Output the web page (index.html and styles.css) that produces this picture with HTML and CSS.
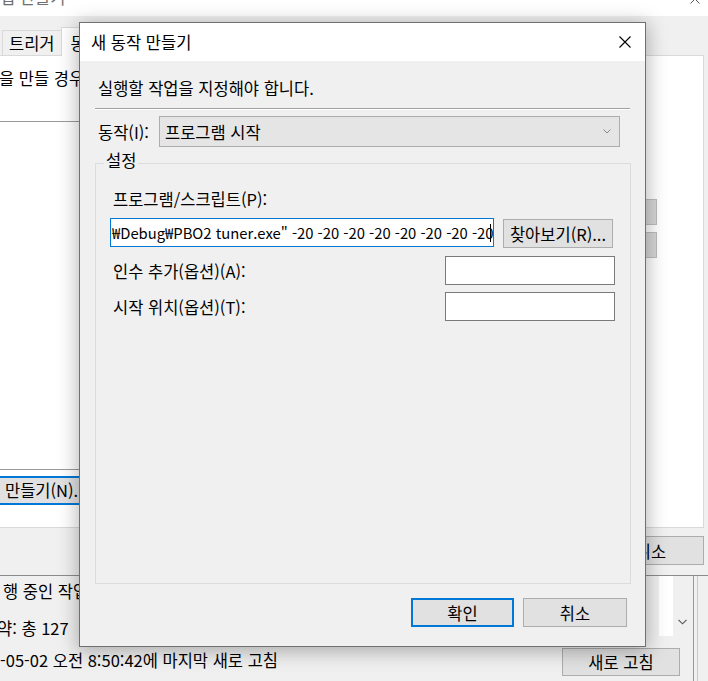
FILE: index.html
```html
<!DOCTYPE html>
<html lang="ko">
<head>
<meta charset="utf-8">
<title>새 동작 만들기</title>
<link rel="stylesheet" href="styles.css">
</head>
<body>
<div class="screen">
  <div class="task-win">
    <div class="tw-title">
      <span class="tw-title-text">업 만들기</span>
      <svg class="tw-close" width="10" height="10" viewBox="0 0 10 10"><path d="M0.5 0.5L9.5 9.5M9.5 0.5L0.5 9.5" stroke="#555" stroke-width="1" fill="none"/></svg>
    </div>
    <div class="tw-body">
      <div class="tabs">
        <div class="tab">트리거</div>
        <div class="tab tab-active"><span class="tab-clip">동작</span></div>
      </div>
      <div class="pane">
        <div class="pane-text">을 만들 경우</div>
        <div class="list-row">
          <div class="listview"></div>
          <div class="side-btns">
            <div class="side-btn"></div>
            <div class="side-btn"></div>
          </div>
        </div>
        <div class="new-btn">만들기(N)...</div>
      </div>
      <div class="tw-footer">
        <div class="btn tw-cancel">취소</div>
      </div>
    </div>
  </div>

  <div class="main-bottom">
    <div class="mb-left">
      <div class="mb-line mb-l1">행 중인 작업</div>
      <div class="mb-line mb-l2">약: 총 127</div>
      <div class="mb-line mb-l3">-05-02 오전 8:50:42에 마지막 새로 고침</div>
    </div>
    <div class="mb-right">
      <div class="mb-boxrow">
        <div class="mb-whitebox"></div>
        <svg class="mb-chev" width="9" height="6" viewBox="0 0 9 6"><path d="M0.5 0.8L4.5 4.8L8.5 0.8" stroke="#555" stroke-width="1.1" fill="none"/></svg>
      </div>
      <div class="btn mb-refresh">새로 고침</div>
    </div>
    <div class="mb-edge"><div class="mb-edge-inner"></div></div>
  </div>

  <div class="dialog">
    <div class="dlg-title">
      <span>새 동작 만들기</span>
      <svg class="dlg-close" width="12" height="12" viewBox="0 0 12 12"><path d="M0.5 0.5L11.5 11.5M11.5 0.5L0.5 11.5" stroke="#000" stroke-width="1.1" fill="none"/></svg>
    </div>
    <div class="dlg-body">
      <div class="intro">실행할 작업을 지정해야 합니다.</div>
      <div class="sep"></div>
      <div class="action-row">
        <span class="lbl">동작(I):</span>
        <div class="combo">
          <span>프로그램 시작</span>
          <svg width="8" height="5" viewBox="0 0 8 5"><path d="M0.5 0.5L4 4L7.5 0.5" stroke="#888" stroke-width="1" fill="none"/></svg>
        </div>
      </div>
      <div class="group">
        <div class="group-label">설정</div>
        <div class="prog-label">프로그램/스크립트(P):</div>
        <div class="prog-row">
          <div class="field field-focus">
            <span class="field-text">₩Debug₩PBO2 tuner.exe" -20 -20 -20 -20 -20 -20 -20 -20</span>
            <span class="caret"></span>
          </div>
          <div class="btn browse-btn">찾아보기(R)...</div>
        </div>
        <div class="opt-row opt-args">
          <span>인수 추가(옵션)(A):</span>
          <div class="field field-small"></div>
        </div>
        <div class="opt-row opt-start">
          <span>시작 위치(옵션)(T):</span>
          <div class="field field-small"></div>
        </div>
      </div>
      <div class="dlg-buttons">
        <div class="btn btn-default dlg-btn">확인</div>
        <div class="btn dlg-btn dlg-btn-cancel">취소</div>
      </div>
    </div>
  </div>
</div>
</body>
</html>
```

FILE: styles.css
```css
* { box-sizing: border-box; }
html, body { margin: 0; padding: 0; }
body {
  width: 708px;
  height: 681px;
  overflow: hidden;
  background: #f0f0f0;
  font-family: "Noto Sans CJK KR", sans-serif;
  font-size: 16.5px;
  line-height: 20px;
  color: #000;
}
.screen {
  position: relative;
  width: 708px;
  height: 681px;
  overflow: hidden;
  background: #f0f0f0;
}

/* generic button */
.btn {
  background: #e1e1e1;
  border: 1px solid #adadad;
  display: flex;
  align-items: center;
  justify-content: center;
  white-space: nowrap;
}

/* background "create task" window */
.task-win {
  height: 576px;
  border-bottom: 1px solid #8c8c8c;
  background: #f0f0f0;
}
.tw-title {
  height: 16px;
  background: #fff;
  display: flex;
  justify-content: space-between;
  overflow: hidden;
}
.tw-title-text {
  margin-top: -13px;
  color: #707070;
  white-space: nowrap;
}
.tw-close {
  margin-top: -6px;
  margin-right: 8px;
}
.tw-body { padding-top: 11px; }
.tabs {
  display: flex;
  align-items: flex-end;
  height: 28px;
  padding-left: 2px;
}
.tab {
  height: 25px;
  padding: 0 6px;
  border: 1px solid #d9d9d9;
  border-bottom: none;
  background: #f0f0f0;
  line-height: 24px;
  white-space: nowrap;
}
.tab-active {
  position: relative;
  height: 29px;
  margin-left: -1px;
  margin-bottom: -1px;
  padding: 0 30px 0 9px;
  background: #fff;
  line-height: 30px;
}
.tab-clip {
  display: inline-block;
  width: 12px;
  overflow: hidden;
  vertical-align: top;
}
.pane {
  height: 473px;
  margin-left: -10px;
  margin-right: 4px;
  border: 1px solid #d9d9d9;
  background: #fff;
  padding-top: 12px;
}
.pane-text {
  padding-left: 8px;
  white-space: nowrap;
}
.list-row {
  display: flex;
  margin-top: 33px;
}
.listview {
  flex: 1;
  height: 349px;
  border: 1px solid #9a9a9a;
  background: #fff;
}
.side-btns {
  display: flex;
  flex-direction: column;
  gap: 7px;
  width: 36px;
  margin: 78px 46px 0 10px;
}
.side-btn {
  height: 26px;
  background: #d6d6d6;
  border: 1px solid #bcbcbc;
}
.new-btn {
  margin-top: 6px;
  height: 29px;
  width: 140px;
  border: 2px solid #0078d7;
  background: #e1e1e1;
  padding-left: 12px;
  line-height: 25px;
  white-space: nowrap;
}
.tw-footer {
  height: 47px;
  display: flex;
  justify-content: flex-end;
  padding-top: 8px;
  padding-right: 4px;
}
.tw-cancel {
  width: 106px;
  height: 29px;
}

/* main window bottom strip */
.main-bottom {
  height: 105px;
  display: flex;
}
.mb-left {
  flex: 1;
  padding-top: 5px;
}
.mb-line { white-space: nowrap; }
.mb-l1 { padding-left: 3px; }
.mb-l2 { margin-top: 17px; margin-left: -3px; }
.mb-l3 { margin-top: 12px; }
.mb-right {
  width: 153px;
  display: flex;
  flex-direction: column;
  align-items: flex-end;
}
.mb-boxrow {
  display: flex;
  align-items: flex-end;
  margin-right: 6px;
}
.mb-whitebox {
  width: 14px;
  height: 60px;
  background: #fff;
}
.mb-chev {
  margin-left: 5px;
  margin-bottom: 11px;
}
.mb-refresh {
  margin-top: 12px;
  margin-right: 13px;
  width: 118px;
  height: 28px;
}
.mb-edge {
  width: 15px;
  border-left: 1px solid #9a9a9a;
}
.mb-edge-inner {
  height: 100%;
  margin-left: 3px;
  border-left: 1px solid #c9c9c9;
}

/* foreground dialog */
.dialog {
  position: absolute;
  z-index: 10;
  left: 79px;
  top: 22px;
  width: 567px;
  height: 625px;
  border: 1px solid #707070;
  background: #f0f0f0;
  box-shadow: 0 3px 18px 2px rgba(0, 0, 0, 0.28);
}
.dlg-title {
  height: 38px;
  background: #fff;
  display: flex;
  align-items: center;
  justify-content: space-between;
  padding: 0 14px 0 11px;
}
.dlg-body {
  padding: 17px 14px 0 15px;
}
.intro { padding-left: 3px; }
.sep {
  margin-top: 10px;
  margin-right: 1px;
  height: 2px;
  border-top: 1px solid #a0a0a0;
  border-bottom: 1px solid #fff;
}
.action-row {
  display: flex;
  align-items: center;
  margin-top: 6px;
}
.lbl {
  width: 64px;
  padding-left: 3px;
  white-space: nowrap;
}
.combo {
  width: 461px;
  height: 31px;
  border: 1px solid #adadad;
  background: #e5e5e5;
  display: flex;
  align-items: center;
  justify-content: space-between;
  padding: 0 8px 0 5px;
}
.group {
  margin-top: 16px;
  height: 421px;
  border: 1px solid #dcdcdc;
}
.group-label {
  margin: -14px 0 0 8px;
  padding: 0 2px;
  width: max-content;
  background: #f0f0f0;
}
.prog-label {
  margin-top: 19px;
  padding-left: 17px;
  white-space: nowrap;
}
.prog-row {
  display: flex;
  align-items: flex-start;
  gap: 9px;
  margin-top: 9px;
  padding-left: 14px;
}
.field {
  height: 29px;
  border: 1px solid #7a7a7a;
  background: #fff;
}
.field-focus {
  position: relative;
  width: 384px;
  border-color: #0078d7;
  display: flex;
  align-items: center;
  overflow: hidden;
  padding-left: 1px;
}
.field-text {
  white-space: nowrap;
  font-size: 14.8px;
}
.caret {
  position: absolute;
  right: 2px;
  top: 5px;
  width: 1px;
  height: 18px;
  background: #000;
}
.browse-btn {
  margin-top: 1px;
  width: 110px;
  height: 29px;
}
.opt-row {
  display: flex;
  align-items: center;
  justify-content: space-between;
  padding: 0 15px 0 17px;
  white-space: nowrap;
}
.opt-args { margin-top: 8px; }
.opt-start { margin-top: 7px; }
.field-small { width: 170px; }
.dlg-buttons {
  display: flex;
  justify-content: flex-end;
  gap: 9px;
  margin-top: 14px;
  padding-right: 4px;
}
.dlg-btn {
  width: 104px;
  height: 29px;
}
.btn-default {
  width: 103px;
  border: 2px solid #0078d7;
}
```
